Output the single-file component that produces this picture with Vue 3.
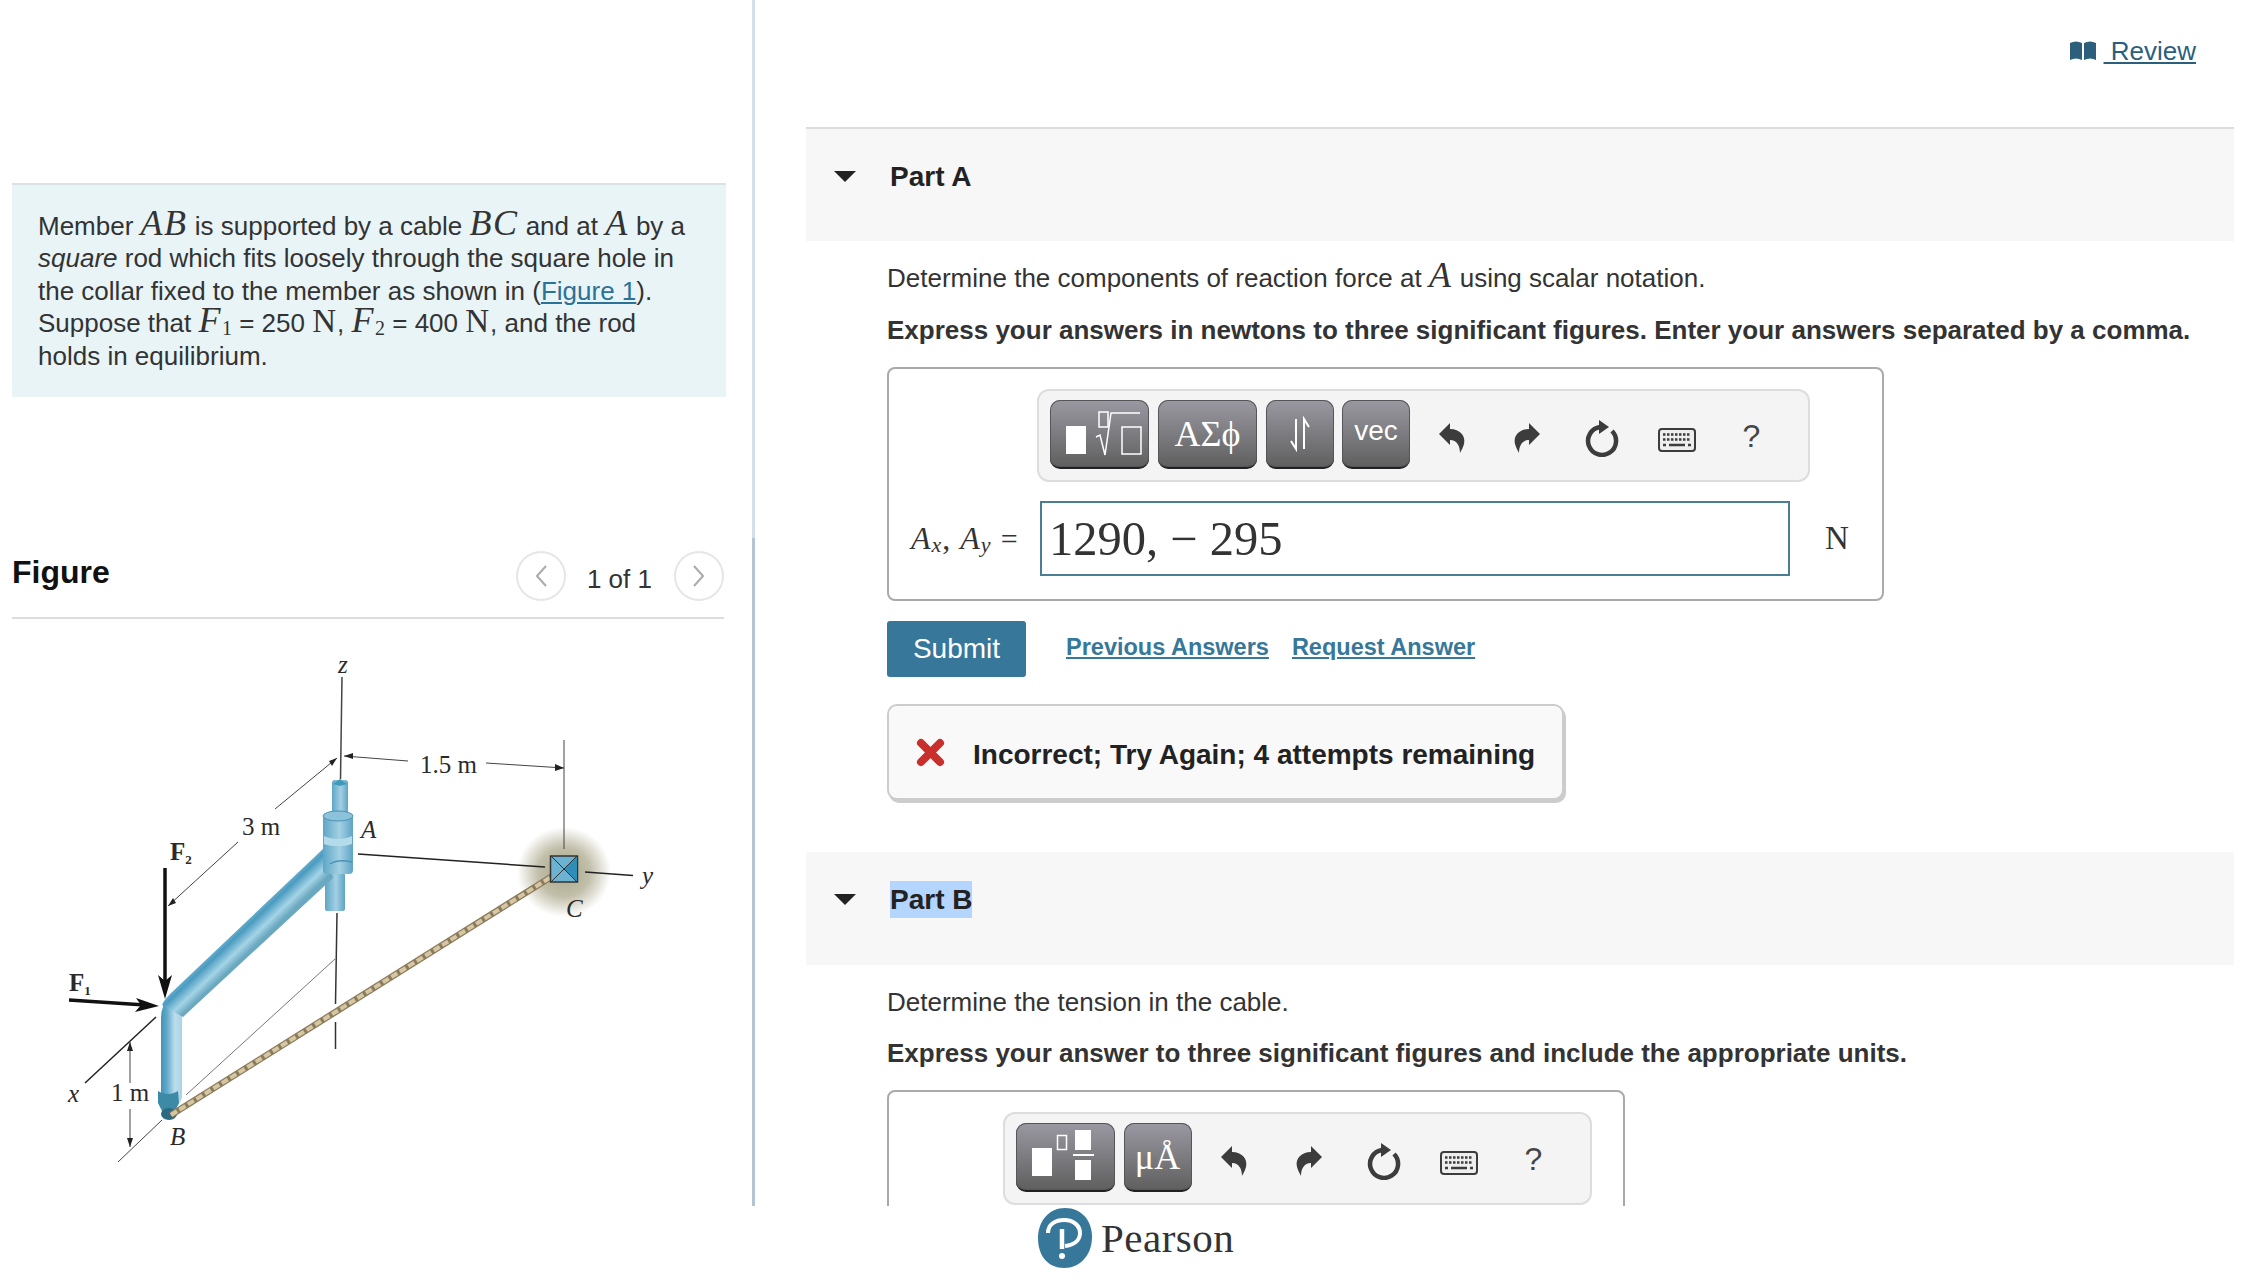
<script setup>
const gray = '#3c3c3c'
</script>

<template>
  <div class="page">
    <div class="main">
      <!-- left pane -->
      <div class="left">
        <div class="problem">
          Member <i class="m">AB</i> is supported by a cable <i class="m">BC</i> and at <i class="m">A</i> by a<br />
          <em>square</em> rod which fits loosely through the square hole in<br />
          the collar fixed to the member as shown in (<a class="link">Figure 1</a>).<br />
          Suppose that <i class="m">F</i><sub>1</sub> = 250 <span class="n">N</span>, <i class="m">F</i><sub>2</sub> = 400 <span class="n">N</span>, and the rod<br />
          holds in equilibrium.
        </div>

        <div class="fig-head">
          <h2>Figure</h2>
          <div class="pager">
            <span class="circle">
              <svg width="14" height="24" viewBox="0 0 14 24" fill="none" stroke="#aaa" stroke-width="2"><path d="M12 2 3 12l9 10" /></svg>
            </span>
            <span class="count">1 of 1</span>
            <span class="circle">
              <svg width="14" height="24" viewBox="0 0 14 24" fill="none" stroke="#aaa" stroke-width="2"><path d="m2 2 9 10-9 10" /></svg>
            </span>
          </div>
        </div>

        <svg class="diagram" width="660" height="560" viewBox="0 0 660 560">
          <defs>
            <radialGradient id="glow">
              <stop offset="0" stop-color="#a9a68a" />
              <stop offset="0.55" stop-color="#c2bfaa" />
              <stop offset="1" stop-color="#fff" />
            </radialGradient>
            <linearGradient id="pipeV" gradientUnits="userSpaceOnUse" x1="120" y1="0" x2="143" y2="0">
              <stop offset="0" stop-color="#3b8fb5" />
              <stop offset="0.3" stop-color="#62a9ca" />
              <stop offset="0.65" stop-color="#bcdeec" />
              <stop offset="1" stop-color="#a5d2e5" />
            </linearGradient>
            <linearGradient id="pipeD" gradientUnits="userSpaceOnUse" x1="200" y1="284" x2="219" y2="304">
              <stop offset="0" stop-color="#7dbad6" />
              <stop offset="0.3" stop-color="#4a9bc0" />
              <stop offset="0.7" stop-color="#a5d4e6" />
              <stop offset="1" stop-color="#6aa8c0" />
            </linearGradient>
            <linearGradient id="collar" x1="0" x2="1" y1="0" y2="0">
              <stop offset="0" stop-color="#5ea6c6" />
              <stop offset="0.55" stop-color="#a3d0e3" />
              <stop offset="1" stop-color="#5ea4c4" />
            </linearGradient>
          </defs>

          <ellipse cx="524" cy="234" rx="47" ry="45" fill="url(#glow)" />

          <g fill="none" stroke="#444" stroke-width="1">
            <path d="M302 39 300.500 141" stroke-width="1.500" />
            <path d="M524 102V211" />
            <path d="M304 118 368 123M446 125 524 130" />
            <path d="M297 120 235 171M198 204 128 268" />
            <path d="M116 379 45 445" stroke="#222" stroke-width="1.500" />
            <path d="M90 404V445M90 471V509M122 482 78 524" />
            <path d="M295 321 146 457" stroke="#777" />
            <path d="M297 275 295.500 366M295.500 384V411" stroke="#333" stroke-width="1.500" />
            <path d="M318 216 505 229" stroke="#222" stroke-width="1.500" />
            <path d="M545 234 593 237.500" stroke="#222" stroke-width="1.500" />
          </g>
          <g fill="#222">
            <path d="m304 118 9-3 0 6z" />
            <path d="m524 130-9-4 0 7z" />
            <path d="m297 120-8 3 3 5z" />
            <path d="m128 268 8-3-3-5z" />
            <path d="m90 404-3 9h6z" />
            <path d="m90 509-3-9h6z" />
          </g>

          <!-- pipe and collar -->
          <rect x="292" y="142" width="16" height="40" rx="3" fill="url(#collar)" />
          <path d="M293 146 300 141 307 146 300 148Z" fill="#3f9ab8" />
          <rect x="285" y="235" width="20" height="38" rx="2" fill="url(#collar)" />
          <path d="M121 468V380Q121 367 130 358L170 320H200L142 378V460L138 468Z" fill="url(#pipeV)" />
          <path d="M122 367 Q124 362 130 356L284 210 293 240 143 379Z" fill="url(#pipeD)" />
          <rect x="283" y="176" width="30" height="60" rx="4" fill="url(#collar)" />
          <ellipse cx="298" cy="178" rx="15" ry="5" fill="#8cc3da" stroke="#4a93b2" />
          <path d="M284 198c8 4 20 4 28 0v8c-8 3-20 3-28 0z" fill="#b4dbea" />
          <path d="M290 226c6-4 14-4 22-2" fill="none" stroke="#4a93b2" stroke-width="1.500" />
          <path d="M118 453c6 4 14 4 20 0l1 12-4 8H122l-4-8Z" fill="#3c8aa6" />
          <ellipse cx="129" cy="476" rx="8" ry="6" fill="#2b6a80" />

          <!-- cable -->
          <path d="M131 477 519 234" stroke="#8b7c5d" stroke-width="6.500" fill="none" />
          <path d="M131 477 519 234" stroke="#d6c6a2" stroke-width="4" stroke-dasharray="7 3" fill="none" />

          <rect x="510.500" y="218" width="27" height="26" fill="#6eb2d2" stroke="#333" stroke-width="1.500" />
          <path d="M524 231 537 218V244Z" fill="#2e8eb8" />
          <path d="M511 218 537 244M537 218 511 244" stroke="#333" fill="none" />

          <!-- forces -->
          <path d="M125 230V345" stroke="#111" stroke-width="3.500" fill="none" />
          <path d="m125 361-7-24 7 6 7-6z" fill="#111" />
          <path d="M29 362 105 367" stroke="#111" stroke-width="3.500" fill="none" />
          <path d="m119 368-24 6 6-7-5-7z" fill="#111" />

          <g class="fig-text">
            <text x="298" y="35" class="it">z</text>
            <text x="380" y="135">1.5 m</text>
            <text x="202" y="197">3 m</text>
            <text x="130" y="222" class="bf">F<tspan font-size="13" dy="4">2</tspan></text>
            <text x="29" y="353" class="bf">F<tspan font-size="13" dy="4">1</tspan></text>
            <text x="321" y="200" class="it">A</text>
            <text x="602" y="246" class="it">y</text>
            <text x="526" y="279" class="it">C</text>
            <text x="28" y="464" class="it">x</text>
            <text x="71" y="463">1 m</text>
            <text x="130" y="507" class="it">B</text>
          </g>
        </svg>
      </div>

      <div class="divider"></div>

      <!-- right pane -->
      <div class="right">
        <div class="review-row">
          <svg width="26" height="20" viewBox="0 0 26 20" fill="#2b5f7c"><path d="M0 2c4-2 8-2 12 0v17c-4-2-8-2-12 0zM14 2c4-2 8-2 12 0v17c-4-2-8-2-12 0z" /></svg>
          <a class="review">&nbsp;Review</a>
        </div>

        <section class="part">
          <div class="part-head first">
            <span class="tri"></span>
            <span class="part-title">Part A</span>
          </div>
          <div class="part-body">
            <p>Determine the components of reaction force at <i class="m">A</i> using scalar notation.</p>
            <p class="bold">Express your answers in newtons to three significant figures. Enter your answers separated by a comma.</p>

            <div class="answer answer-a">
              <div class="toolbar tb-a">
                <span class="btn w99">
                  <svg width="99" height="69" viewBox="0 0 99 69" fill="none" stroke="#fff" stroke-width="1.500">
                    <rect x="16" y="27" width="20" height="28" fill="#fff" stroke="none" />
                    <rect x="49" y="13" width="9" height="15" />
                    <path d="M46 38 50 36 55 56 61 14H90" />
                    <rect x="72" y="28" width="19" height="27" />
                  </svg>
                </span>
                <span class="btn w99 serif">ΑΣϕ</span>
                <span class="btn w68">
                  <svg width="24" height="36" viewBox="0 0 24 36" fill="none" stroke="#fff" stroke-width="2">
                    <path d="M8 3V33L3 25M16 33V3L21 11" />
                  </svg>
                </span>
                <span class="btn w68 vec">vec</span>
                <div class="tools">
                  <svg class="tool" width="30" height="32" viewBox="0 0 30 32" :fill="gray"><path d="M2 12 13 1V7C23 7 29 14 27 22 26 26 24 29 23 31 23 24 20 18 13 18V23Z" /></svg>
                  <svg class="tool" width="30" height="32" viewBox="0 0 30 32" :fill="gray"><path d="M28 12 17 1V7C7 7 1 14 3 22 4 26 6 29 7 31 7 24 10 18 17 18V23Z" /></svg>
                  <svg class="tool" width="34" height="38" viewBox="0 0 34 38" fill="none" :stroke="gray" stroke-width="4.500"><path d="M27 12A14 14 0 1 1 15 8" /><path d="M14 1 24 8 14 15Z" :fill="gray" stroke="none" /></svg>
                  <svg class="tool kbd" width="38" height="24" viewBox="0 0 38 24" fill="none" :stroke="gray"><rect x="1" y="1" width="36" height="22" rx="3" fill="#eee" stroke-width="2" /><path d="M5 6.500H33M5 11.500H33" stroke-width="2.500" stroke-dasharray="2.500 1.500" /><path d="M5 17H8M11 17H27M30 17H33" stroke-width="2.500" /></svg>
                  <span class="help">?</span>
                </div>
              </div>
              <div class="input-row">
                <span class="label"><i>A<sub>x</sub></i>, <i>A<sub>y</sub></i> <span class="eq">=</span></span>
                <div class="input">1290, − 295</div>
                <span class="unit">N</span>
              </div>
            </div>

            <div class="actions">
              <button class="submit">Submit</button>
              <a class="act first-act">Previous Answers</a>
              <a class="act">Request Answer</a>
            </div>

            <div class="feedback">
              <svg width="29" height="29" viewBox="0 0 29 29" stroke="#c9302c" stroke-width="8" stroke-linecap="round"><path d="M5 5 24 24M24 5 5 24" /></svg>
              <span class="fb-text">Incorrect; Try Again; 4 attempts remaining</span>
            </div>
          </div>
        </section>

        <section class="part part-b">
          <div class="part-head">
            <span class="tri"></span>
            <span class="part-title selected">Part B</span>
          </div>
          <div class="part-body">
            <p class="tight">Determine the tension in the cable.</p>
            <p class="bold">Express your answer to three significant figures and include the appropriate units.</p>

            <div class="answer answer-b">
              <div class="toolbar tb-b">
                <span class="btn w99">
                  <svg width="99" height="69" viewBox="0 0 99 69" fill="#fff">
                    <rect x="16" y="26" width="20" height="28" />
                    <rect x="41.500" y="13.500" width="9" height="14" fill="none" stroke="#fff" stroke-width="1.500" />
                    <rect x="59" y="8" width="16" height="20" />
                    <rect x="57" y="32" width="21" height="2" />
                    <rect x="59" y="38" width="16" height="20" />
                  </svg>
                </span>
                <span class="btn w68 serif">μÅ</span>
                <div class="tools">
                  <svg class="tool" width="30" height="32" viewBox="0 0 30 32" :fill="gray"><path d="M2 12 13 1V7C23 7 29 14 27 22 26 26 24 29 23 31 23 24 20 18 13 18V23Z" /></svg>
                  <svg class="tool" width="30" height="32" viewBox="0 0 30 32" :fill="gray"><path d="M28 12 17 1V7C7 7 1 14 3 22 4 26 6 29 7 31 7 24 10 18 17 18V23Z" /></svg>
                  <svg class="tool" width="34" height="38" viewBox="0 0 34 38" fill="none" :stroke="gray" stroke-width="4.500"><path d="M27 12A14 14 0 1 1 15 8" /><path d="M14 1 24 8 14 15Z" :fill="gray" stroke="none" /></svg>
                  <svg class="tool kbd" width="38" height="24" viewBox="0 0 38 24" fill="none" :stroke="gray"><rect x="1" y="1" width="36" height="22" rx="3" fill="#eee" stroke-width="2" /><path d="M5 6.500H33M5 11.500H33" stroke-width="2.500" stroke-dasharray="2.500 1.500" /><path d="M5 17H8M11 17H27M30 17H33" stroke-width="2.500" /></svg>
                  <span class="help">?</span>
                </div>
              </div>
            </div>
          </div>
        </section>
      </div>
    </div>

    <footer class="footer">
      <svg width="54" height="60" viewBox="0 0 54 60">
        <path d="M27 0C44 0 54 13 54 29 54 47 42 60 26 60 10 60 0 48 0 30 0 13 11 0 27 0Z" fill="#37779a" />
        <path d="M10 25C10 16 18 12 26 12 36 12 42 18 42 25 42 33 35 37 27 38" fill="none" stroke="#fff" stroke-width="4" />
        <path d="M24 21V41" fill="none" stroke="#fff" stroke-width="4.500" />
        <circle cx="24" cy="48" r="3" fill="#fff" />
      </svg>
      <span class="brand">Pearson</span>
    </footer>
  </div>
</template>

<style>
html, body { margin: 0; background: #fff; }
</style>

<style scoped>
.page {
  width: 2258px;
  height: 1280px;
  overflow: hidden;
  font-family: "Liberation Sans", Arial, sans-serif;
  color: #333;
  font-size: 26px;
}

.main {
  display: flex;
  height: 1206px;
  overflow: hidden;
}

/* left pane */
.left {
  width: 752px;
  flex: none;
  box-sizing: border-box;
  padding: 183px 0 0 12px;
}

.problem {
  width: 714px;
  height: 214px;
  box-sizing: border-box;
  padding: 25px 0 0 26px;
  background: #e9f4f7;
  border-top: 2px solid #d9e2e6;
  line-height: 32.400px;
}

.m, .n {
  font-family: "Liberation Serif", "Times New Roman", serif;
  font-size: 36px;
  line-height: 0;
  letter-spacing: 1.500px;
}
.n { font-size: 33px; letter-spacing: 1px; }

sub {
  font-family: "Liberation Serif", "Times New Roman", serif;
  font-size: 20px;
  line-height: 0;
  vertical-align: -3px;
}

.link { color: #2a7297; text-decoration: underline; }

.fig-head {
  width: 712px;
  height: 222px;
  box-sizing: border-box;
  border-bottom: 2px solid #ddd;
  display: flex;
  align-items: flex-end;
  justify-content: space-between;
  padding-bottom: 16px;
}

.fig-head h2 {
  margin: 0 0 9px;
  font-size: 32px;
  line-height: 40px;
  color: #111;
}

.pager { display: flex; align-items: center; }

.circle {
  width: 50px;
  height: 50px;
  box-sizing: border-box;
  border: 2px solid #e6e6e6;
  border-radius: 50%;
  display: flex;
  align-items: center;
  justify-content: center;
}

.count { margin: 6px 22px 0 21px; }

.diagram { display: block; margin: 19px 0 0 28px; }

.fig-text text {
  font-family: "Liberation Serif", "Times New Roman", serif;
  font-size: 25px;
  fill: #2a2a2a;
}
.fig-text .it { font-style: italic; }
.fig-text .bf { font-weight: bold; }

.divider {
  width: 3px;
  flex: none;
  background: linear-gradient(#d3e0ea 0, #d3e0ea 538px, #b3c4d6 538px);
}

/* right pane */
.right { width: 1503px; flex: none; }

.review-row {
  height: 127px;
  box-sizing: border-box;
  padding: 36px 62px 0 0;
  display: flex;
  justify-content: flex-end;
  align-items: flex-start;
}
.review-row svg { margin: 5px 8px 0 0; }
.review { color: #2b5f7c; text-decoration: underline; line-height: 30px; }

.part { margin-left: 51px; width: 1428px; }
.part-b { margin-top: 52px; }

.part-head {
  height: 113px;
  box-sizing: border-box;
  background: #f7f7f7;
  display: flex;
  align-items: center;
  padding: 0 0 18px 28px;
}
.part-head.first { border-top: 2px solid #ddd; height: 114px; }

.tri {
  width: 0;
  height: 0;
  border-left: 11px solid transparent;
  border-right: 11px solid transparent;
  border-top: 11px solid #222;
  margin-right: 34px;
}

.part-title { font-weight: bold; font-size: 28px; line-height: 37px; color: #222; }
.selected { background: #b4d5fe; }

.part-body { padding: 21px 0 0 81px; }

.part-body p { margin: 0 0 20px; line-height: 32px; height: 32px; }
.part-body .bold { font-weight: bold; margin-bottom: 21px; }
.part-body .tight { margin-bottom: 19px; }

.answer {
  box-sizing: border-box;
  border: 2px solid #aaa;
  border-radius: 8px;
  padding-top: 20px;
}
.answer-a { width: 997px; height: 234px; }
.answer-b { width: 738px; height: 160px; }

.toolbar {
  box-sizing: border-box;
  height: 93px;
  background: #f4f4f4;
  border: 2px solid #ddd;
  border-radius: 12px;
  display: flex;
  align-items: flex-start;
  padding: 9px 0 0 11px;
  gap: 8.500px;
}
.tb-a { width: 773px; margin-left: 148px; gap: 9px; }
.tb-a .vec { margin-left: -1px; }
.tb-b { width: 589px; margin-left: 114px; }

.btn {
  height: 69px;
  box-sizing: border-box;
  border-radius: 10px;
  background: linear-gradient(#9a99a2, #5f5f5f);
  border-bottom: 2px solid #222;
  box-shadow: inset 0 0 0 1px #55555a;
  color: #fff;
  display: flex;
  align-items: center;
  justify-content: center;
  flex: none;
}
.w99 { width: 99px; }
.w68 { width: 68px; }
.serif { font-family: "Liberation Serif", "Times New Roman", serif; font-size: 36px; }
.vec { font-size: 28px; padding-bottom: 6px; }

.tools {
  display: grid;
  grid-template-columns: repeat(5, 75px);
  justify-items: center;
  align-items: center;
  height: 69px;
  margin-left: -4px;
  padding-top: 3px;
}
.tb-a .tools { margin-left: -5px; }
.kbd { margin-top: 5px; }

.help { font-size: 32px; color: #444; margin-top: -3px; }

.input-row {
  display: flex;
  align-items: center;
  margin-top: 19px;
}
.label {
  width: 151px;
  box-sizing: border-box;
  padding-left: 22px;
  font-family: "Liberation Serif", "Times New Roman", serif;
  font-size: 32px;
  letter-spacing: 1px;
  white-space: nowrap;
}
.label sub { font-size: 22px; }
.eq { font-size: 30px; }

.input {
  width: 750px;
  height: 75px;
  box-sizing: border-box;
  border: 2px solid #4a7d96;
  padding-left: 7px;
  font-family: "Liberation Serif", "Times New Roman", serif;
  font-size: 48.500px;
  line-height: 71px;
}

.unit {
  margin-left: 35px;
  font-family: "Liberation Serif", "Times New Roman", serif;
  font-size: 33px;
}

.actions {
  display: flex;
  align-items: center;
  margin-top: 20px;
}
.submit {
  width: 139px;
  height: 56px;
  border: none;
  border-radius: 3px;
  background: #37779a;
  color: #fff;
  font-family: inherit;
  font-size: 28px;
}
.act {
  color: #37779a;
  font-weight: bold;
  font-size: 23.500px;
  text-decoration: underline;
  margin: 0 0 4px 23px;
}
.first-act { margin-left: 40px; }

.feedback {
  width: 677px;
  height: 96px;
  margin-top: 27px;
  box-sizing: border-box;
  border: 2px solid #ccc;
  border-radius: 10px;
  background: #f9f9f9;
  box-shadow: 2px 3px 0 #ccc;
  display: flex;
  align-items: center;
  padding-left: 27px;
  gap: 28px;
  font-weight: bold;
  font-size: 28px;
  color: #222;
  white-space: nowrap;
}
.fb-text { margin-top: 5px; }

.footer {
  display: flex;
  align-items: center;
  padding: 2px 0 0 1038px;
  gap: 9px;
}
.brand {
  font-family: "Liberation Serif", "Times New Roman", serif;
  font-size: 41px;
  letter-spacing: 0.500px;
  color: #333;
}
</style>
